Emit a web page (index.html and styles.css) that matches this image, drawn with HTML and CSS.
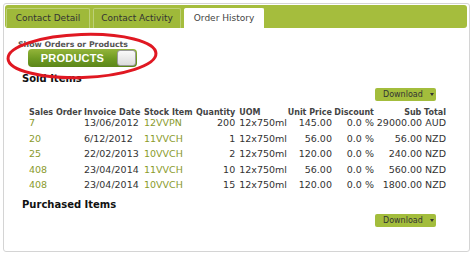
FILE: index.html
```html
<!DOCTYPE html>
<html>
<head>
<meta charset="utf-8">
<link rel="stylesheet" href="styles.css">
</head>
<body>
<div class="panel">
  <div class="tabbar">
    <div class="tab">Contact Detail</div>
    <div class="tab">Contact Activity</div>
    <div class="tab active">Order History</div>
  </div>
  <div class="content">
    <div class="toggle-block">
      <div class="toggle-label">Show Orders or Products</div>
      <div class="toggle">
        <span class="toggle-text">PRODUCTS</span>
        <span class="knob"></span>
      </div>
      <svg class="ring" width="160" height="54" viewBox="0 0 160 54">
        <ellipse cx="77" cy="27" rx="74" ry="21.5" fill="none" stroke="#e01822" stroke-width="3" transform="rotate(-2 77 27)"/>
      </svg>
    </div>
    <h2 class="section">Sold Items</h2>
    <div class="btn-row"><span class="btn">Download <span class="caret"></span></span></div>
    <table class="grid">
      <thead>
        <tr>
          <th class="c1">Sales Order</th>
          <th class="c2">Invoice Date</th>
          <th class="c3">Stock Item</th>
          <th class="c4 r">Quantity</th>
          <th class="c5">UOM</th>
          <th class="c6 r">Unit Price</th>
          <th class="c7 r">Discount</th>
          <th class="c8 r">Sub Total</th>
        </tr>
      </thead>
      <tbody>
        <tr><td class="link">7</td><td>13/06/2012</td><td class="link">12VVPN</td><td class="r">200</td><td class="uom">12x750ml</td><td class="r">145.00</td><td class="r">0.0 %</td><td class="r">29000.00 AUD</td></tr>
        <tr><td class="link">20</td><td>6/12/2012</td><td class="link">11VVCH</td><td class="r">1</td><td class="uom">12x750ml</td><td class="r">56.00</td><td class="r">0.0 %</td><td class="r">56.00 NZD</td></tr>
        <tr><td class="link">25</td><td>22/02/2013</td><td class="link">10VVCH</td><td class="r">2</td><td class="uom">12x750ml</td><td class="r">120.00</td><td class="r">0.0 %</td><td class="r">240.00 NZD</td></tr>
        <tr><td class="link">408</td><td>23/04/2014</td><td class="link">11VVCH</td><td class="r">10</td><td class="uom">12x750ml</td><td class="r">56.00</td><td class="r">0.0 %</td><td class="r">560.00 NZD</td></tr>
        <tr><td class="link">408</td><td>23/04/2014</td><td class="link">10VVCH</td><td class="r">15</td><td class="uom">12x750ml</td><td class="r">120.00</td><td class="r">0.0 %</td><td class="r">1800.00 NZD</td></tr>
      </tbody>
    </table>
    <h2 class="section purchased">Purchased Items</h2>
    <div class="btn-row"><span class="btn">Download <span class="caret"></span></span></div>
  </div>
</div>
</body>
</html>
```

FILE: styles.css
```css
* { box-sizing: border-box; }
html, body { margin: 0; padding: 0; background: #fff; }
body { font-family: "DejaVu Sans", Verdana, sans-serif; color: #333; }

.panel {
  margin: 3px 0 0 3px;
  width: 467px;
  height: 249px;
  border: 1px solid #d4d4d4;
  border-radius: 3px;
  padding: 1px 2px 0 1px;
}

.tabbar {
  height: 23px;
  background: #a5bd3d;
  border-radius: 3px;
  display: flex;
  align-items: flex-end;
  gap: 3px;
  padding-left: 1px;
}
.tab {
  height: 20px;
  line-height: 19px;
  font-size: 9px;
  color: #333;
  white-space: nowrap;
  text-align: center;
  background: #9fb93a;
  border: 1px solid #bdd079;
  border-bottom: none;
  border-radius: 2px 2px 0 0;
}
.tab:nth-child(1) { width: 84px; }
.tab:nth-child(2) { width: 88px; }
.tab.active {
  width: 80px;
  background: #fff;
  border-color: #fff;
  color: #444;
}

.content { padding-left: 13px; }

.toggle-block { position: relative; padding-top: 12px; }
.toggle-label {
  font-size: 7.8px;
  font-weight: bold;
  color: #555;
  line-height: 9px;
}
.toggle {
  margin-left: 10px;
  width: 109px;
  height: 18px;
  border-radius: 4px;
  background: linear-gradient(#94b53a, #6e9a22 55%, #5c861a);
  display: flex;
  align-items: center;
  padding: 1px 1px 1px 0;
}
.toggle-text {
  flex: 1;
  text-align: center;
  font-family: "Liberation Sans", Arial, sans-serif;
  font-weight: bold;
  font-size: 11px;
  color: #fff;
  letter-spacing: 0.2px;
}
.knob {
  width: 19px;
  height: 16px;
  border-radius: 3px;
  border: 1px solid #9a9a9a;
  background: linear-gradient(#fafafa, #dcdcdc);
}
.ring {
  position: absolute;
  left: -13px;
  top: 1px;
}

.section {
  margin: 6px 0 0 4px;
  font-size: 10px;
  font-weight: bold;
  color: #111;
  line-height: 12px;
}
.purchased { margin-top: 4px; }

.btn-row {
  display: flex;
  justify-content: flex-end;
  padding-right: 31px;
  margin-top: 3px;
}
.btn {
  display: inline-flex;
  align-items: center;
  width: 61px;
  height: 13px;
  background: #a3bd3c;
  border-radius: 2px;
  font-size: 8px;
  color: #333;
  padding-left: 8px;
}
.caret {
  margin-left: 7px;
  width: 0; height: 0;
  border-left: 2px solid transparent;
  border-right: 2px solid transparent;
  border-top: 3px solid #333;
}

.grid {
  border-collapse: collapse;
  margin: 7px 0 0 11px;
  table-layout: fixed;
}
.grid th, .grid td { padding: 0; white-space: nowrap; text-align: left; }
.grid th {
  font-size: 8px;
  font-weight: bold;
  color: #444;
  line-height: 9px;
  height: 9px;
  vertical-align: bottom;
}
.grid td {
  font-size: 9.5px;
  line-height: 11px;
  height: 15.6px;
  vertical-align: top;
  color: #333;
}
.grid .r { text-align: right; }
.grid .link { color: #8a9a2c; }
.grid .uom { padding-left: 4px; }
.c1 { width: 55px; }
.c2 { width: 60px; }
.c3 { width: 52px; }
.c4 { width: 37px; }
.c5 { width: 50px; padding-left: 4px !important; }
.c6 { width: 45px; }
.c7 { width: 42px; }
.c8 { width: 72px; }
```
